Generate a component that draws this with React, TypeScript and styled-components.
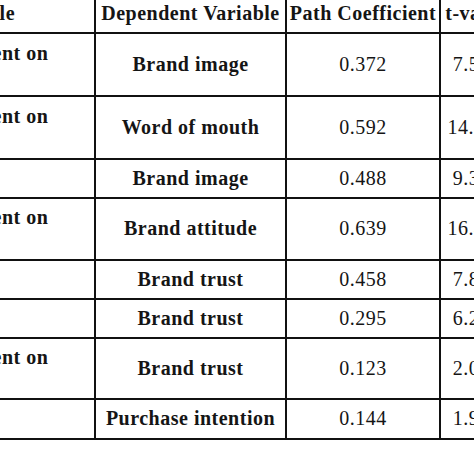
import React from "react";
import styled, { createGlobalStyle } from "styled-components";

const GlobalStyle = createGlobalStyle`
  html, body {
    margin: 0;
    padding: 0;
    background: #ffffff;
    overflow: hidden;
  }
  #root {
    width: 474px;
    height: 474px;
  }
`;

const Viewport = styled.div`
  width: 474px;
  height: 474px;
  overflow: hidden;
  background: #ffffff;
`;

const Grid = styled.div`
  display: grid;
  width: max-content;
  grid-template-columns: 280px 189px 152px 71px;
  grid-template-rows: 37px 61px 61px 37px 60px 37px 37px 59px 38px;
  gap: 2px;
  padding: 2px;
  background: #111111;
  margin-left: -188px;
  margin-top: -7px;
  font-family: "Liberation Serif", "Times New Roman", serif;
  font-size: 20px;
  line-height: 22px;
  letter-spacing: 0.5px;
  color: #151515;
`;

const Cell = styled.div<{ $bold?: boolean; $align?: "left" | "center" }>`
  background: #ffffff;
  display: flex;
  align-items: center;
  justify-content: ${(p) => (p.$align === "left" ? "flex-start" : "center")};
  text-align: ${(p) => (p.$align === "left" ? "left" : "center")};
  padding: ${(p) => (p.$align === "left" ? "0 16px 2px 6px" : "0 2px 2px")};
  font-weight: ${(p) => (p.$bold ? 700 : 400)};
  white-space: ${(p) => (p.$align === "left" ? "normal" : "nowrap")};
  overflow: hidden;
`;

type Row = { iv: string; dv: string; coef: string; t: string };

const rows: Row[] = [
  { iv: "Customer engagement on social media", dv: "Brand image", coef: "0.372", t: "7.541" },
  { iv: "Customer engagement on social media", dv: "Word of mouth", coef: "0.592", t: "14.218" },
  { iv: "Word of mouth", dv: "Brand image", coef: "0.488", t: "9.327" },
  { iv: "Customer engagement on social media", dv: "Brand attitude", coef: "0.639", t: "16.402" },
  { iv: "Brand image", dv: "Brand trust", coef: "0.458", t: "7.806" },
  { iv: "Brand attitude", dv: "Brand trust", coef: "0.295", t: "6.213" },
  { iv: "Customer engagement on social media", dv: "Brand trust", coef: "0.123", t: "2.047" },
  { iv: "Brand trust", dv: "Purchase intention", coef: "0.144", t: "1.962" },
];

export default function App() {
  return (
    <Viewport>
      <GlobalStyle />
      <Grid role="table">
        <Cell $bold $align="left" role="columnheader">Independent Variable</Cell>
        <Cell $bold role="columnheader">Dependent Variable</Cell>
        <Cell $bold role="columnheader">Path Coefficient</Cell>
        <Cell $bold role="columnheader">t-value</Cell>
        {rows.map((r, i) => (
          <React.Fragment key={i}>
            <Cell $bold $align="left" role="cell">{r.iv}</Cell>
            <Cell $bold role="cell">{r.dv}</Cell>
            <Cell role="cell">{r.coef}</Cell>
            <Cell role="cell">{r.t}</Cell>
          </React.Fragment>
        ))}
      </Grid>
    </Viewport>
  );
}
